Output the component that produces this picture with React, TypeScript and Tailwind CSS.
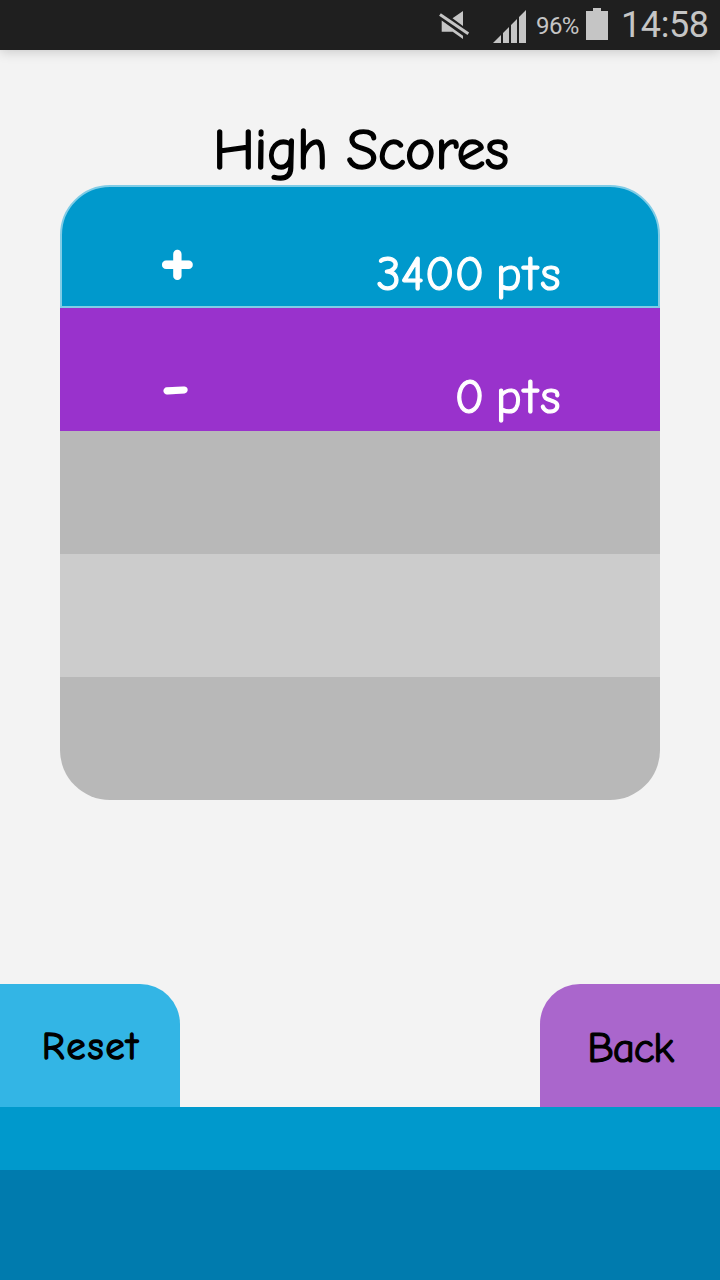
interface ScoreRow {
    sign: string;
    points: string;
    className: string;
    signClassName?: string;
}

const rows: ScoreRow[] = [
    { sign: "+", points: "3400", className: "rounded-t-[50px] border-2 border-[#80cce6] bg-[#0099cc] pl-[96px] pr-[95px] pt-[57px]", signClassName: "text-[88px] leading-[28px]" },
    { sign: "-", points: "0", className: "bg-[#9932cc] pl-[100px] pr-[97px] pt-[59px]", signClassName: "h-[42px] text-[76px] leading-[35px] -rotate-3" },
    { sign: "", points: "", className: "bg-[#b8b8b8]" },
    { sign: "", points: "", className: "bg-[#cccccc]" },
    { sign: "", points: "", className: "rounded-b-[50px] bg-[#b8b8b8]" },
];

function StatusBar() {
    return (
        <header className="flex h-[50px] shrink-0 items-start bg-[#1f1f1f] pl-[438px] font-['Roboto',sans-serif] text-[#c5c5c5] shadow-[0_1px_12px_rgba(0,0,0,0.2)]">
            <svg className="mt-[9px] h-8 w-8 shrink-0" viewBox="0 0 32 32" fill="currentColor">
                <path d="M14.5 9.3L25 2V17ZM3.7 11.5L25 26.8V30L14.7 22.8H3.7Z" />
                <path d="M2 5.5L30.3 24.8" stroke="currentColor" strokeWidth="3" />
            </svg>
            <svg className="ml-[23px] mt-[10px] h-[33px] w-[33px] shrink-0" viewBox="0 0 33 33" fill="currentColor">
                <path d="M0 33L8 25V33ZM10 23L16 17V33H10ZM18 15L24 9V33H18ZM26 7L33 0V33H26Z" />
            </svg>
            <span className="ml-[10px] mt-[9px] w-[43px] whitespace-nowrap text-[24px] leading-[34px] tracking-[-0.6px]">96%</span>
            <svg className="ml-[7px] mt-2 h-8 w-[22px] shrink-0" viewBox="0 0 22 32" fill="currentColor">
                <path d="M7 0H15V3H22V32H0V3H7Z" />
            </svg>
            <span className="ml-[13px] mt-[4px] whitespace-nowrap text-[36px] leading-[42px] tracking-[-0.4px]">14:58</span>
        </header>
    );
}

export default function App() {
    return (
        <div className="flex h-[1280px] w-[720px] flex-col overflow-hidden bg-[#f3f3f3] font-['Comic_Neue','Comic_Sans_MS','Lato',sans-serif] text-black">
            <StatusBar />

            <main className="flex flex-1 flex-col">
                <h1 className="mt-[65px] h-[70px] whitespace-nowrap pl-[213px] pt-[4px] text-[58px] leading-[64px] tracking-[-0.6px] [-webkit-text-stroke:1.5px_currentColor]">High Scores</h1>

                <section className="mx-[60px]">
                    {rows.map((row, index) => (
                        <div key={index} className={`flex h-[123px] justify-between whitespace-nowrap text-white ${row.className}`}>
                            <span className={`font-bold ${row.signClassName ?? ""}`}>{row.sign}</span>
                            {row.points && (
                                <span className="text-[49px] leading-[60px] [word-spacing:-5px] [-webkit-text-stroke:1.2px_currentColor]">
                                    {row.points} <span className="tracking-[2.4px]">pts</span>
                                </span>
                            )}
                        </div>
                    ))}
                </section>

                <div className="mt-auto flex h-[123px] justify-between">
                    <button className="w-[180px] rounded-tr-[40px] bg-[#33b5e5] pl-[2px] pt-[4px] text-[38px] tracking-[2.2px] [-webkit-text-stroke:1.5px_currentColor]">Reset</button>
                    <button className="w-[180px] rounded-tl-[40px] bg-[#aa66cc] pt-[5px] text-[43px] tracking-[-1.2px] [-webkit-text-stroke:1.2px_currentColor]">Back</button>
                </div>
            </main>

            <footer className="h-[173px] shrink-0 bg-[#007bae]">
                <div className="h-[63px] bg-[#0099cc]" />
            </footer>
        </div>
    );
}
